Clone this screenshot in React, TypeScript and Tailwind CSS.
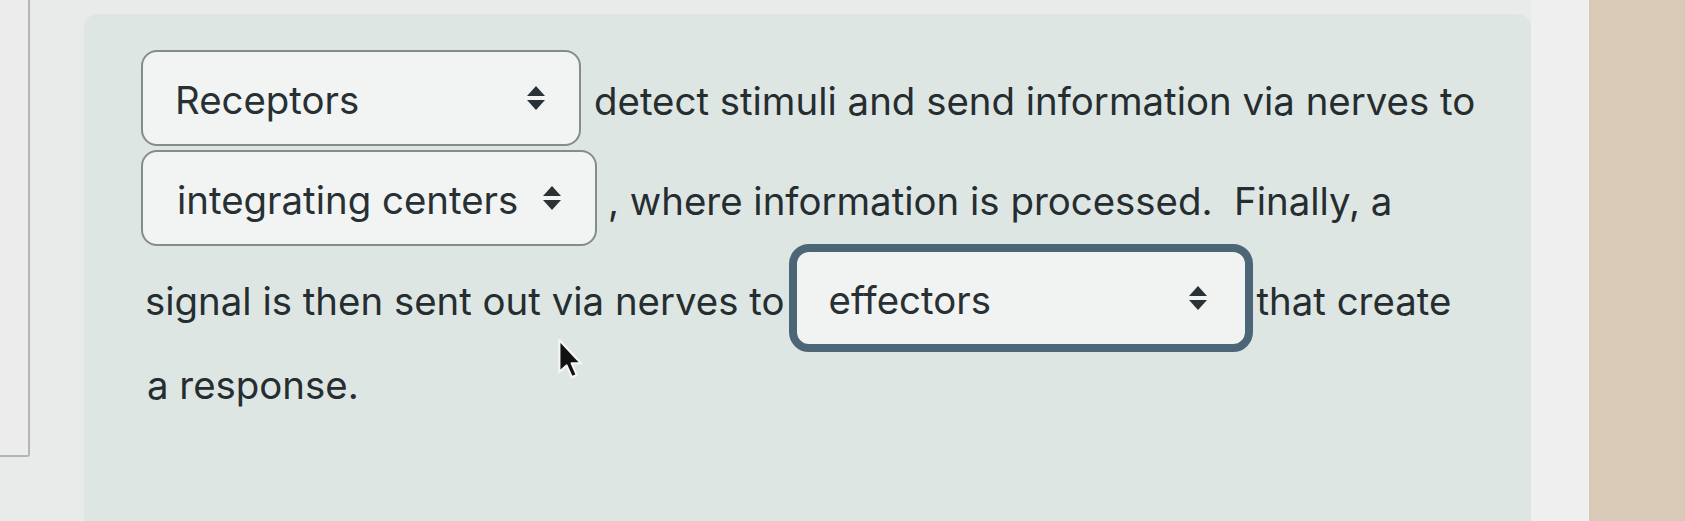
import React from "react";

const font = { fontFamily: "Inter, 'Noto Sans', 'Liberation Sans', sans-serif" };

function UpDown() {
  return (
    <svg width="22" height="28" viewBox="0 0 22 28" className="shrink-0">
      <polygon points="11,2 20,12 2,12" fill="#2b3235" />
      <polygon points="2,16 20,16 11,26" fill="#2b3235" />
    </svg>
  );
}

function Select({
  label,
  width,
  focused = false,
  padLeft,
  padRight,
}: {
  label: string;
  width: string;
  focused?: boolean;
  padLeft: string;
  padRight: string;
}) {
  return (
    <div
      className={
        focused
          ? `flex h-[108px] shrink-0 items-center justify-between rounded-[20px] border-[8px] border-[#4c6677] bg-[#f1f3f2] ${width} ${padLeft} ${padRight}`
          : `flex h-[96px] shrink-0 items-center justify-between rounded-[16px] border-2 border-[#858c8c] bg-[#f2f4f3] ${width} ${padLeft} ${padRight}`
      }
    >
      <span className="pt-[4px] text-[38.4px] leading-none text-[#283033]">{label}</span>
      <UpDown />
    </div>
  );
}

function Cursor() {
  return (
    <svg
      width="30"
      height="44"
      viewBox="0 0 20 30"
      className="absolute left-[556px] top-[337px]"
    >
      <path
        d="M2 2 L2 24 L7 19.5 L10.5 27.5 L14 26 L10.5 18 L17 18 Z"
        fill="#111"
        stroke="#f4f4f4"
        strokeWidth="1.6"
        strokeLinejoin="round"
      />
    </svg>
  );
}

export default function App() {
  return (
    <div
      className="relative flex h-[521px] w-[1685px] overflow-hidden bg-[#e9ebea]"
      style={font}
    >
      {/* side panel edge */}
      <div className="h-[457px] w-[30px] shrink-0 rounded-br-[3px] border-b-2 border-r-2 border-[#b3b6b6] bg-[#ebeceb]" />
      <div className="w-[54px] shrink-0" />

      {/* question card */}
      <div className="mt-[14px] flex w-[1447px] shrink-0 flex-col rounded-t-[14px] bg-[#dee6e3] pl-[57px] pt-[34px] text-[#262d30]">
        <div className="flex h-[100px] items-center">
          <Select label="Receptors" width="w-[440px]" padLeft="pl-[32px]" padRight="pr-[32px]" />
          <span className="ml-[13px] whitespace-nowrap pt-[6px] text-[38.4px] leading-none">
            detect stimuli and send information via nerves to
          </span>
        </div>
        <div className="flex h-[100px] items-center">
          <Select label="integrating centers" width="w-[456px]" padLeft="pl-[34px]" padRight="pr-[32px]" />
          <span className="ml-[11px] whitespace-nowrap pt-[6px] text-[38.4px] leading-none">
            , where information is processed.&nbsp; Finally, a
          </span>
        </div>
        <div className="flex h-[100px] items-center">
          <span className="ml-[4px] whitespace-nowrap pt-[6px] text-[38.4px] leading-none">
            signal is then sent out via nerves to
          </span>
          <div className="ml-[4px]">
            <Select label="effectors" width="w-[464px]" focused padLeft="pl-[32px]" padRight="pr-[36px]" />
          </div>
          <span className="ml-[4px] whitespace-nowrap pt-[6px] text-[38.4px] leading-none">
            that create
          </span>
        </div>
        <div className="pl-[6px] pt-[18px]">
          <span className="whitespace-nowrap text-[38.4px] leading-none">a response.</span>
        </div>
      </div>

      {/* margin beyond the card */}
      <div className="w-[58px] shrink-0 bg-[#eeefee]" />
      <div className="flex-1 bg-[#d8cab6]" />

      <Cursor />
    </div>
  );
}
